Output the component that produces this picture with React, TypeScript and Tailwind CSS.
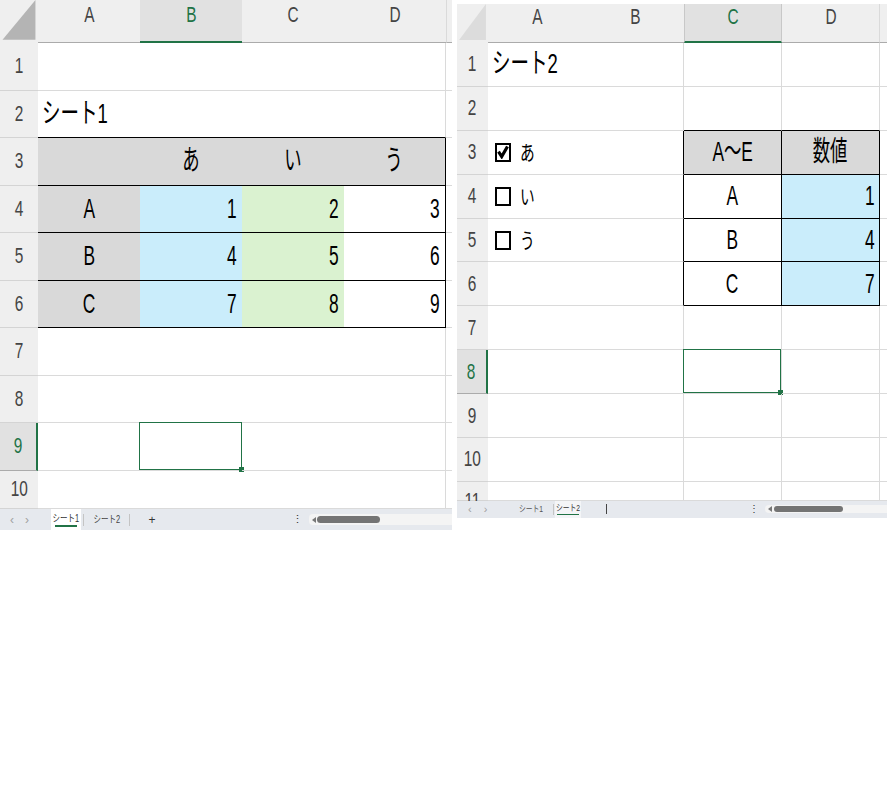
import type { ReactNode } from 'react'

const GREEN = 'text-[#217346]'

function Txt({ children, className = '' }: { children: ReactNode; className?: string }) {
    return <span className={`inline-block whitespace-nowrap leading-none ${className}`}>{children}</span>
}

function Corner({ light }: { light?: boolean }) {
    return (
        <svg className="absolute inset-0 h-full w-full" viewBox="0 0 30 39" preserveAspectRatio="none">
            <polygon points="2,36 28,36 28,0" fill={light ? '#dcdcdc' : '#b4b4b4'} />
        </svg>
    )
}

function Handle() {
    return <div className="absolute -bottom-[3px] -right-[3px] h-[5px] w-[5px] bg-[#217346]" />
}

function Selection() {
    return (
        <div className="absolute -left-px -top-px bottom-0 right-0 border-[1.5px] border-[#217346]">
            <Handle />
        </div>
    )
}

/* ---------------- シート1 ---------------- */

const leftData: Record<number, string[]> = {
    3: ['', 'あ', 'い', 'う'],
    4: ['A', '1', '2', '3'],
    5: ['B', '4', '5', '6'],
    6: ['C', '7', '8', '9'],
}

const leftBg = ['bg-[#d9d9d9]', 'bg-[#caedfb]', 'bg-[#daf2d0]', 'bg-white']

function LeftRow({ r }: { r: number }) {
    const sel = r === 9
    const table = r >= 3 && r <= 6
    const blackBottom = r >= 2 && r <= 6
    return (
        <div className={`flex ${r === 10 ? 'h-[38.5px]' : 'h-[47.5px]'}`}>
            <div
                className={`flex w-[38px] shrink-0 items-center justify-center border-b text-[22px] ${
                    sel
                        ? 'border-r-2 border-b-[#ababab] border-r-[#217346] bg-[#e1e1e1] text-[#217346]'
                        : 'border-[#d4d4d4] bg-[#efefef] text-[#444]'
                }`}
            >
                <Txt className="scale-x-[0.7]">{r}</Txt>
            </div>
            {[0, 1, 2, 3].map((c) => {
                const text = leftData[r]?.[c] ?? ''
                const bg = !table ? '' : r === 3 ? 'bg-[#d9d9d9]' : leftBg[c]
                const bb = blackBottom ? 'border-b-black' : 'border-b-[#dadada]'
                const br = c === 3 ? (table ? 'border-r border-r-black' : 'border-r border-r-[#dadada]') : ''
                const center = r === 3 || c === 0
                return (
                    <div
                        key={c}
                        className={`relative flex w-[102px] shrink-0 items-center border-b ${bb} ${br} ${bg} ${
                            center ? 'justify-center' : 'justify-end pr-[5px]'
                        }`}
                    >
                        {text && (
                            <Txt className={`text-[28px] scale-x-[0.62] ${center ? 'origin-center' : 'origin-right'}`}>
                                {text}
                            </Txt>
                        )}
                        {r === 2 && c === 0 && (
                            <Txt className="absolute left-[4px] origin-left text-[28px] scale-x-[0.66]">シート1</Txt>
                        )}
                        {sel && c === 1 && <Selection />}
                    </div>
                )
            })}
            <div className="flex-1 border-b border-[#dadada]" />
        </div>
    )
}

function LeftSheet() {
    return (
        <div className="flex w-[452px] shrink-0 flex-col">
            <div className="flex h-[43px] bg-[#efefef] text-[22px] text-[#444]">
                <div className="relative w-[38px] shrink-0">
                    <Corner />
                </div>
                {['A', 'B', 'C', 'D'].map((l) => (
                    <div
                        key={l}
                        className={`flex w-[102px] shrink-0 justify-center pt-[4px] ${
                            l === 'B' ? `border-b-2 border-[#217346] bg-[#e1e1e1] ${GREEN}` : 'border-b border-[#ababab]'
                        }`}
                    >
                        <Txt className="scale-x-[0.7]">{l}</Txt>
                    </div>
                ))}
                <div className="flex-1 border-b border-[#ababab] border-l border-l-[#dadada]" />
            </div>
            {[1, 2, 3, 4, 5, 6, 7, 8, 9, 10].map((r) => (
                <LeftRow key={r} r={r} />
            ))}
            <div className="flex h-[21px] items-center bg-[#e6e9ee] text-[#a0a0a0]">
                <Txt className="ml-[10px] text-[12px]">‹</Txt>
                <Txt className="ml-[11px] text-[12px]">›</Txt>
                <div className="ml-[22px] flex h-full w-[30px] flex-col items-center justify-center gap-[1px] bg-white">
                    <Txt className="mt-[2px] scale-x-[0.75] text-[10px] text-[#333]">シート1</Txt>
                    <div className="h-[1.5px] w-[22px] bg-[#217346]" />
                </div>
                <div className="ml-[2px] h-[12px] w-px bg-[#c4c4c4]" />
                <Txt className="ml-[5px] scale-x-[0.75] text-[10px] text-[#444]">シート2</Txt>
                <div className="ml-[4px] h-[12px] w-px bg-[#c4c4c4]" />
                <Txt className="ml-[19px] text-[12px] text-[#333]">+</Txt>
                <Txt className="ml-[136px] text-[11px] text-[#333]">⋮</Txt>
                <div className="ml-[6px] flex h-[11px] flex-1 items-center rounded-l-[4px] bg-[#f4f4f4]">
                    <div className="ml-[3px] h-0 w-0 border-y-[3px] border-r-[4px] border-y-transparent border-r-[#777]" />
                    <div className="ml-[1px] h-[7px] w-[63px] rounded-full bg-[#747474]" />
                </div>
            </div>
        </div>
    )
}

/* ---------------- シート2 ---------------- */

const rightData: Record<number, string[]> = {
    3: ['A〜E', '数値'],
    4: ['A', '1'],
    5: ['B', '4'],
    6: ['C', '7'],
}

const checks: Record<number, [boolean, string]> = {
    3: [true, 'あ'],
    4: [false, 'い'],
    5: [false, 'う'],
}

function CheckBox({ on }: { on: boolean }) {
    return (
        <div className="flex h-[19px] w-[16px] shrink-0 items-center justify-center border-2 border-black">
            {on && (
                <svg viewBox="0 0 12 15" className="h-[14px] w-[12px]">
                    <path d="M1.2 7.2 L4.6 12.4 L10.8 1.6" fill="none" stroke="#000" strokeWidth="3.4" />
                </svg>
            )}
        </div>
    )
}

function RightRow({ r }: { r: number }) {
    const sel = r === 8
    const table = r >= 3 && r <= 6
    const blackBottom = r >= 2 && r <= 6
    const chk = checks[r]
    return (
        <div className={`flex ${r === 11 ? 'h-[19px] overflow-hidden' : 'h-[43.9px]'}`}>
            <div
                className={`flex w-[31px] shrink-0 justify-center border-b text-[22px] ${
                    r === 11 ? 'items-start pt-[8px]' : 'items-center'
                } ${
                    sel
                        ? 'border-r-2 border-b-[#ababab] border-r-[#217346] bg-[#e1e1e1] text-[#217346]'
                        : 'border-[#d4d4d4] bg-[#efefef] text-[#444]'
                }`}
            >
                <Txt className="scale-x-[0.7]">{r}</Txt>
            </div>
            {/* A */}
            <div className="relative flex w-[98px] shrink-0 items-center border-b border-[#dadada] pl-[7px]">
                {r === 1 && <Txt className="absolute left-[4px] origin-left scale-x-[0.66] text-[28px]">シート2</Txt>}
                {chk && (
                    <>
                        <CheckBox on={chk[0]} />
                        <Txt className="ml-[9px] origin-left scale-x-[0.7] text-[21px]">{chk[1]}</Txt>
                    </>
                )}
            </div>
            {/* B */}
            <div
                className={`w-[98px] shrink-0 border-b border-r border-b-[#dadada] ${
                    table ? 'border-r-black' : 'border-r-[#dadada]'
                }`}
            />
            {/* C, D */}
            {[0, 1].map((c) => {
                const text = rightData[r]?.[c] ?? ''
                const bg = r === 3 ? 'bg-[#d9d9d9]' : table && c === 1 ? 'bg-[#caedfb]' : ''
                const bb = blackBottom ? 'border-b-black' : 'border-b-[#dadada]'
                const br = table ? 'border-r-black' : 'border-r-[#dadada]'
                const center = r === 3 || c === 0
                return (
                    <div
                        key={c}
                        className={`relative flex w-[98px] shrink-0 items-center border-b border-r ${bb} ${br} ${bg} ${
                            center ? 'justify-center' : 'justify-end pr-[4px]'
                        }`}
                    >
                        {text && (
                            <Txt className={`text-[28px] scale-x-[0.62] ${center ? 'origin-center' : 'origin-right'}`}>
                                {text}
                            </Txt>
                        )}
                        {sel && c === 0 && <Selection />}
                    </div>
                )
            })}
            <div className="flex-1 border-b border-[#dadada]" />
        </div>
    )
}

function RightSheet() {
    return (
        <div className="mt-[4px] flex w-[430px] shrink-0 flex-col">
            <div className="flex h-[39px] bg-[#efefef] text-[22px] text-[#444]">
                <div className="relative w-[31px] shrink-0">
                    <Corner light />
                </div>
                {['A', 'B', 'C', 'D'].map((l) => (
                    <div
                        key={l}
                        className={`flex w-[98px] shrink-0 justify-center pt-[2px] ${
                            l === 'C'
                                ? `border-x border-b-2 border-x-[#c8c8c8] border-b-[#217346] bg-[#e1e1e1] ${GREEN}`
                                : 'border-b border-[#ababab]'
                        } ${l === 'D' ? 'border-r border-r-[#dadada]' : ''}`}
                    >
                        <Txt className="scale-x-[0.7]">{l}</Txt>
                    </div>
                ))}
                <div className="flex-1 border-b border-[#ababab]" />
            </div>
            {[1, 2, 3, 4, 5, 6, 7, 8, 9, 10, 11].map((r) => (
                <RightRow key={r} r={r} />
            ))}
            <div className="flex h-[17px] items-center bg-[#e6e9ee] text-[#a0a0a0]">
                <Txt className="ml-[11px] text-[11px]">‹</Txt>
                <Txt className="ml-[12px] text-[11px]">›</Txt>
                <Txt className="ml-[28px] scale-x-[0.75] text-[9px] text-[#555]">シート1</Txt>
                <div className="ml-[6px] h-[11px] w-px bg-[#c4c4c4]" />
                <div className="ml-[1px] flex h-full w-[26px] flex-col items-center justify-center bg-[#f4f5f7]">
                    <Txt className="mt-[1px] scale-x-[0.75] text-[9px] text-[#333]">シート2</Txt>
                    <div className="mt-[1px] h-px w-[22px] bg-[#217346]" />
                </div>
                <div className="ml-[25px] h-[10px] w-px bg-[#444]" />
                <Txt className="ml-[142px] text-[10px] text-[#333]">⋮</Txt>
                <div className="ml-[6px] flex h-[8px] flex-1 items-center rounded-l-[4px] bg-[#f4f4f4]">
                    <div className="ml-[3px] h-0 w-0 border-y-[3px] border-r-[4px] border-y-transparent border-r-[#777]" />
                    <div className="ml-[2px] h-[6px] w-[69px] rounded-full bg-[#747474]" />
                </div>
            </div>
        </div>
    )
}

export default function App() {
    return (
        <div className="flex h-[790px] w-[896px] items-start gap-[5px] bg-white font-['Liberation_Sans','Noto_Sans_CJK_JP',sans-serif] text-black">
            <LeftSheet />
            <RightSheet />
        </div>
    )
}
